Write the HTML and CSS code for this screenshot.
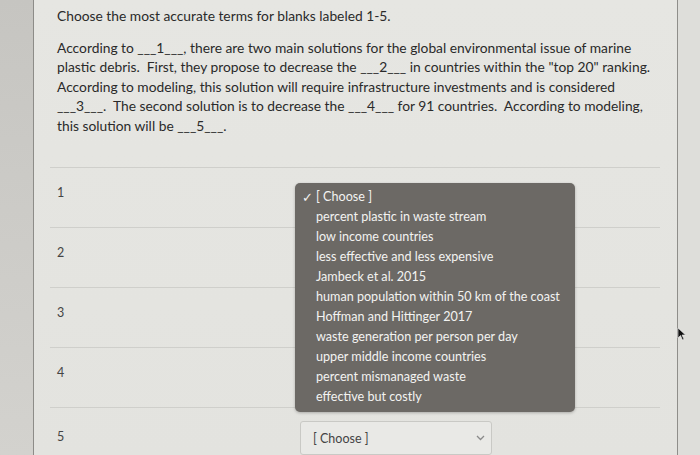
FILE: index.html
```html
<!DOCTYPE html>
<html>
<head>
<meta charset="utf-8">
<link rel="stylesheet" href="styles.css">
</head>
<body>
<div class="screen">
  <div class="leftbar"></div>
  <div class="panel">
    <p class="title">Choose the most accurate terms for blanks labeled 1-5.</p>
    <p class="question">According to ___1___, there are two main solutions for the global environmental issue of marine<br>plastic debris.&nbsp; First, they propose to decrease the ___2___ in countries within the "top 20" ranking.<br>According to modeling, this solution will require infrastructure investments and is considered<br>___3___.&nbsp; The second solution is to decrease the ___4___ for 91 countries.&nbsp; According to modeling,<br>this solution will be ___5___.</p>
    <div class="answers">
      <div class="row"><span class="num">1</span></div>
      <div class="row"><span class="num">2</span></div>
      <div class="row"><span class="num">3</span></div>
      <div class="row"><span class="num">4</span></div>
      <div class="row last"><span class="num">5</span>
        <div class="select"><span>[ Choose ]</span>
          <svg class="chev" width="9" height="6" viewBox="0 0 9 6"><path d="M1 1 L4.5 4.5 L8 1" fill="none" stroke="#8a8a8a" stroke-width="1.3"/></svg>
        </div>
      </div>
    </div>
  </div>
  <div class="rightbar"></div>

  <div class="menu">
    <div class="item checked"><span class="check">✓</span>[ Choose ]</div>
    <div class="item">percent plastic in waste stream</div>
    <div class="item">low income countries</div>
    <div class="item">less effective and less expensive</div>
    <div class="item">Jambeck et al. 2015</div>
    <div class="item">human population within 50 km of the coast</div>
    <div class="item">Hoffman and Hittinger 2017</div>
    <div class="item">waste generation per person per day</div>
    <div class="item">upper middle income countries</div>
    <div class="item">percent mismanaged waste</div>
    <div class="item">effective but costly</div>
  </div>

  <svg class="cursor" width="10" height="14" viewBox="0 0 10 14"><path d="M1 1 L1 11 L3.5 8.5 L5.5 13 L7 12.3 L5 8 L8.5 8 Z" fill="#111" stroke="#eee" stroke-width="0.6"/></svg>
</div>
</body>
</html>
```
FILE: styles.css
```css
html, body {
  margin: 0;
  padding: 0;
}
body {
  width: 700px;
  height: 455px;
  overflow: hidden;
  font-family: Lato, "Open Sans", sans-serif;
  color: #2a2a2a;
}
.screen {
  position: relative;
  display: flex;
  width: 700px;
  height: 455px;
  background: #e4e4e0;
}
.leftbar {
  width: 33px;
  flex: none;
  background: linear-gradient(#c6c5c1, #d3d2ce);
  border-right: 1px solid #8d8c88;
}
.rightbar {
  width: 22px;
  flex: none;
  background: #dededa;
  border-left: 1px solid #8f8e8a;
}
.panel {
  flex: 1;
  padding: 0 0 0 23px;
  background: linear-gradient(#e6e6e2, #e3e3df);
}
.title {
  margin: 6px 0 0;
  font-size: 13.8px;
  line-height: 19px;
}
.question {
  margin: 13px 0 0;
  font-size: 13.8px;
  line-height: 19.4px;
  white-space: nowrap;
}
.answers {
  margin: 32px 17px 0 -7px;
}
.row {
  display: flex;
  align-items: flex-start;
  height: 60px;
  box-sizing: border-box;
  border-top: 1px solid #cfcfcb;
}
.row.last {
  height: 48px;
}
.num {
  width: 243px;
  flex: none;
  padding: 15px 0 0 7px;
  font-size: 12.5px;
  line-height: 20px;
  color: #444;
}
.row.last .num {
  padding-top: 19px;
}
.select {
  margin-top: 13px;
  height: 34px;
  border: 1px solid #c9c9c5;
  border-radius: 3px;
  background: #e9e9e6;
  display: flex;
  align-items: center;
  justify-content: space-between;
  padding: 0 6px 0 12px;
  box-sizing: border-box;
  width: 192px;
  font-size: 12.5px;
  color: #444;
}
.chev {
  display: block;
}
.menu {
  position: absolute;
  left: 295px;
  top: 183px;
  width: 280px;
  height: 229px;
  box-sizing: border-box;
  padding-top: 4px;
  background: #6c6965;
  border-radius: 5px;
  box-shadow: 0 1px 3px rgba(0,0,0,0.25);
}
.item {
  position: relative;
  padding-left: 21px;
  font-size: 12.6px;
  line-height: 20px;
  color: #f3f3f1;
  white-space: nowrap;
}
.check {
  position: absolute;
  left: 7px;
  top: 0;
  font-size: 13px;
}
.cursor {
  position: absolute;
  left: 677px;
  top: 327px;
}
```
